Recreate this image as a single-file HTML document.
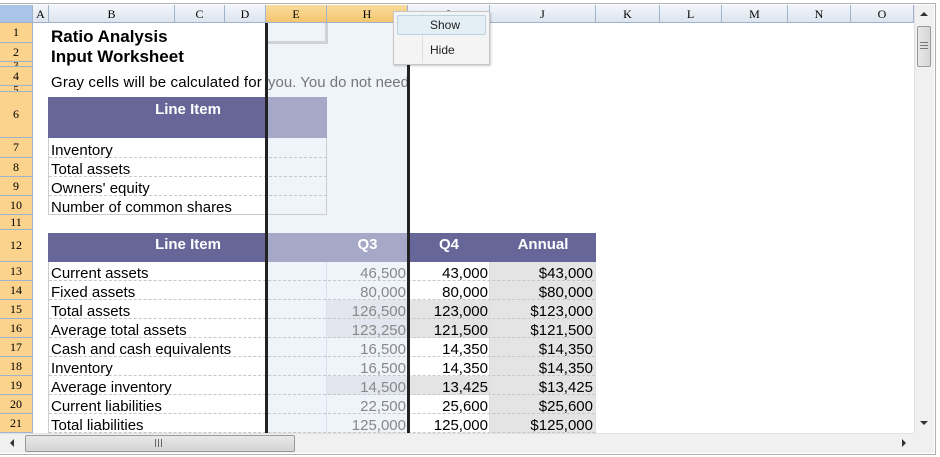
<!DOCTYPE html>
<html><head><meta charset="utf-8"><style>
*{margin:0;padding:0;box-sizing:border-box}
body{width:940px;height:457px;background:#fff;position:relative;overflow:hidden;font-family:"Liberation Sans",sans-serif}
.a{position:absolute}
.ch{position:absolute;top:5px;height:18px;border-right:1px solid #9fb3cc;border-bottom:1px solid #9fb3cc;background:linear-gradient(#f3f6fb,#dde4ee);font:12px "Liberation Serif",serif;text-align:center;line-height:18px;color:#000}
.ch.s{background:linear-gradient(#f9dc9e,#f5c56e)}
.rh{position:absolute;left:0;width:33px;background:#fcd38c;border-bottom:1px solid #9fb3cc;border-right:1px solid #9fb3cc;font:12px "Liberation Serif",serif;text-align:center;color:#000;overflow:hidden}
.t{position:absolute;font-size:15px;color:#000;white-space:nowrap;line-height:19px}
.d{position:absolute;border-bottom:1px dashed #c8c8c8}
.n{position:absolute;font-size:15px;text-align:right;line-height:19px;white-space:nowrap}
.hd{position:absolute;color:#fff;font-weight:bold;font-size:15px;text-align:center}
</style></head><body>
<div class="ch" style="left:0;width:33px;background:#a9c4e6"></div>
<div class="ch" style="left:33px;width:16px">A</div>
<div class="ch" style="left:49px;width:126px">B</div>
<div class="ch" style="left:175px;width:50px">C</div>
<div class="ch" style="left:225px;width:41px">D</div>
<div class="ch s" style="left:266px;width:61px">E</div>
<div class="ch s" style="left:327px;width:81px">H</div>
<div class="ch" style="left:408px;width:82px">I</div>
<div class="ch" style="left:490px;width:106px">J</div>
<div class="ch" style="left:596px;width:64px">K</div>
<div class="ch" style="left:660px;width:62px">L</div>
<div class="ch" style="left:722px;width:66px">M</div>
<div class="ch" style="left:788px;width:63px">N</div>
<div class="ch" style="left:851px;width:63px">O</div>
<div class="rh" style="top:23px;height:20px;line-height:19px">1</div>
<div class="rh" style="top:43px;height:19px;line-height:18px">2</div>
<div class="rh" style="top:62px;height:5px;line-height:10px;font-size:10px">3</div>
<div class="rh" style="top:67px;height:19px;line-height:18px">4</div>
<div class="rh" style="top:86px;height:6px;line-height:10px;font-size:10px">5</div>
<div class="rh" style="top:92px;height:46px;line-height:45px">6</div>
<div class="rh" style="top:138px;height:20px;line-height:19px">7</div>
<div class="rh" style="top:158px;height:19px;line-height:18px">8</div>
<div class="rh" style="top:177px;height:19px;line-height:18px">9</div>
<div class="rh" style="top:196px;height:19px;line-height:18px">10</div>
<div class="rh" style="top:215px;height:15px;line-height:14px">11</div>
<div class="rh" style="top:230px;height:32px;line-height:31px">12</div>
<div class="rh" style="top:262px;height:19px;line-height:18px">13</div>
<div class="rh" style="top:281px;height:19px;line-height:18px">14</div>
<div class="rh" style="top:300px;height:19px;line-height:18px">15</div>
<div class="rh" style="top:319px;height:19px;line-height:18px">16</div>
<div class="rh" style="top:338px;height:19px;line-height:18px">17</div>
<div class="rh" style="top:357px;height:19px;line-height:18px">18</div>
<div class="rh" style="top:376px;height:19px;line-height:18px">19</div>
<div class="rh" style="top:395px;height:19px;line-height:18px">20</div>
<div class="rh" style="top:414px;height:19px;line-height:18px">21</div>
<div class="a" style="left:266px;top:23px;width:142px;height:410px;background:#eff3fa"></div>
<div class="a" style="left:266px;top:23px;width:62px;height:21px;border-right:3px solid #d0d2d6;border-bottom:3px solid #d0d2d6"></div>
<div class="t" style="left:51px;top:27px;font-weight:bold;font-size:17px">Ratio Analysis</div>
<div class="t" style="left:51px;top:47px;font-weight:bold;font-size:17px">Input Worksheet</div>
<div class="t" style="left:51px;top:73px;letter-spacing:0.15px">Gray cells will be calculated for</div>
<div class="t" style="left:268px;top:73px;width:140px;overflow:hidden;color:#777">you. You do not need</div>
<div class="a" style="left:48px;top:97px;width:218px;height:41px;background:#666699"></div>
<div class="a" style="left:266px;top:97px;width:61px;height:41px;background:#a6a8c8"></div>
<div class="hd" style="left:48px;top:101px;width:280px">Line Item</div>
<div class="a" style="left:48px;top:138px;width:279px;height:77px;border:1px solid #ccc;border-top:none"></div>
<div class="d" style="left:49px;top:138px;width:278px;height:20px"></div>
<div class="d" style="left:49px;top:158px;width:278px;height:19px"></div>
<div class="d" style="left:49px;top:177px;width:278px;height:19px"></div>
<div class="t" style="left:51px;top:141px">Inventory</div>
<div class="t" style="left:51px;top:160px">Total assets</div>
<div class="t" style="left:51px;top:179px">Owners' equity</div>
<div class="t" style="left:51px;top:198px">Number of common shares</div>
<div class="a" style="left:48px;top:233px;width:218px;height:29px;background:#666699"></div>
<div class="a" style="left:266px;top:233px;width:142px;height:29px;background:#a6a8c8"></div>
<div class="a" style="left:408px;top:233px;width:188px;height:29px;background:#666699"></div>
<div class="hd" style="left:48px;top:236px;width:280px">Line Item</div>
<div class="hd" style="left:327px;top:236px;width:81px">Q3</div>
<div class="hd" style="left:408px;top:236px;width:82px">Q4</div>
<div class="hd" style="left:490px;top:236px;width:106px">Annual</div>
<div class="a" style="left:490px;top:262px;width:105px;height:171px;background:#e4e4e4"></div>
<div class="a" style="left:327px;top:300px;width:81px;height:38px;background:#e3e6ee"></div>
<div class="a" style="left:408px;top:300px;width:82px;height:38px;background:#e4e4e4"></div>
<div class="a" style="left:327px;top:376px;width:81px;height:19px;background:#e3e6ee"></div>
<div class="a" style="left:408px;top:376px;width:82px;height:19px;background:#e4e4e4"></div>
<div class="a" style="left:48px;top:262px;width:1px;height:171px;background:#ccc"></div>
<div class="a" style="left:326px;top:262px;width:1px;height:171px;background:#dde"></div>
<div class="a" style="left:489px;top:262px;width:1px;height:171px;background:#ddd"></div>
<div class="a" style="left:595px;top:262px;width:1px;height:171px;background:#ddd"></div>
<div class="d" style="left:49px;top:262px;width:546px;height:19px"></div>
<div class="d" style="left:49px;top:281px;width:546px;height:19px"></div>
<div class="d" style="left:49px;top:300px;width:546px;height:19px"></div>
<div class="d" style="left:49px;top:319px;width:546px;height:19px"></div>
<div class="d" style="left:49px;top:338px;width:546px;height:19px"></div>
<div class="d" style="left:49px;top:357px;width:546px;height:19px"></div>
<div class="d" style="left:49px;top:376px;width:546px;height:19px"></div>
<div class="d" style="left:49px;top:395px;width:546px;height:19px"></div>
<div class="d" style="left:49px;top:414px;width:546px;height:19px"></div>
<div class="t" style="left:51px;top:264px">Current assets<br>Fixed assets<br>Total assets<br>Average total assets<br>Cash and cash equivalents<br>Inventory<br>Average inventory<br>Current liabilities<br>Total liabilities</div>
<div class="n" style="left:327px;top:264px;width:79px;color:#888">46,500<br>80,000<br>126,500<br>123,250<br>16,500<br>16,500<br>14,500<br>22,500<br>125,000</div>
<div class="n" style="left:408px;top:264px;width:80px">43,000<br>80,000<br>123,000<br>121,500<br>14,350<br>14,350<br>13,425<br>25,600<br>125,000</div>
<div class="n" style="left:490px;top:264px;width:103px">$43,000<br>$80,000<br>$123,000<br>$121,500<br>$14,350<br>$14,350<br>$13,425<br>$25,600<br>$125,000</div>
<div class="a" style="left:265px;top:23px;width:3px;height:410px;background:#222"></div>
<div class="a" style="left:407px;top:23px;width:3px;height:410px;background:#222"></div>
<div class="a" style="left:393px;top:11px;width:97px;height:54px;background:#f4f4f4;border:1px solid #c6c6c6;box-shadow:1px 1px 2px rgba(0,0,0,.2)"></div>
<div class="a" style="left:422px;top:13px;width:1px;height:50px;background:#ddd"></div>
<div class="a" style="left:397px;top:15px;width:89px;height:20px;background:#e3eef5;border:1px solid #bcd3e3;border-radius:2px"></div>
<div class="a" style="left:430px;top:18px;font-size:12px;color:#222">Show</div>
<div class="a" style="left:430px;top:43px;font-size:12px;color:#222">Hide</div>
<div class="a" style="left:914px;top:5px;width:20px;height:428px;background:#f0f0f0;border-left:1px solid #e0e0e0"></div>
<div class="a" style="left:917px;top:26px;width:14px;height:41px;background:linear-gradient(90deg,#e8e8e8,#d6d6d6);border:1px solid #9a9a9a;border-radius:2px"></div>
<div class="a" style="left:920px;top:42px;width:8px;height:7px;border-top:1px solid #777;border-bottom:1px solid #777"></div>
<div class="a" style="left:920px;top:45px;width:8px;height:1px;background:#777"></div>
<div class="a" style="left:920px;top:12px;width:0;height:0;border-left:4px solid transparent;border-right:4px solid transparent;border-bottom:4px solid #333"></div>
<div class="a" style="left:920px;top:421px;width:0;height:0;border-left:4px solid transparent;border-right:4px solid transparent;border-top:4px solid #333"></div>
<div class="a" style="left:0;top:433px;width:914px;height:20px;background:#f0f0f0;border-top:1px solid #e0e0e0"></div>
<div class="a" style="left:25px;top:435px;width:270px;height:17px;background:linear-gradient(#e8e8e8,#d4d4d4);border:1px solid #9a9a9a;border-radius:2px"></div>
<div class="a" style="left:155px;top:439px;width:7px;height:8px;border-left:1px solid #666;border-right:1px solid #666"></div>
<div class="a" style="left:158px;top:439px;width:1px;height:8px;background:#666"></div>
<div class="a" style="left:10px;top:439px;width:0;height:0;border-top:4px solid transparent;border-bottom:4px solid transparent;border-right:4px solid #333"></div>
<div class="a" style="left:902px;top:439px;width:0;height:0;border-top:4px solid transparent;border-bottom:4px solid transparent;border-left:4px solid #333"></div>
<div class="a" style="left:914px;top:433px;width:20px;height:20px;background:#f0f0f0"></div>
<div class="a" style="left:0;top:3px;width:936px;height:452px;border:1px solid #b0b0b0;border-left:none;pointer-events:none"></div>
</body></html>
